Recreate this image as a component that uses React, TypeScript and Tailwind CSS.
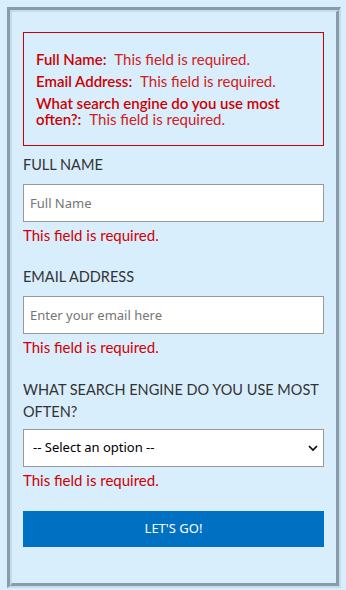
import React from "react";

const errors = [
  { label: "Full Name:", msg: "This field is required." },
  { label: "Email Address:", msg: "This field is required." },
  { label: "What search engine do you use most often?:", msg: "This field is required." },
];

const Label = ({ children }: { children: React.ReactNode }) => (
  <label className="block text-[14.5px] leading-[22px] text-[#333] uppercase">{children}</label>
);

const FieldError = () => (
  <p className="text-[15px] leading-[22px] text-[#d00000] mt-[2px]">This field is required.</p>
);

export default function App() {
  return (
    <div
      className="min-h-[590px] bg-[#d9eefc] pt-[7px] pl-[7px]"
      style={{ fontFamily: "Lato, 'Open Sans', sans-serif" }}
    >
      <div className="w-[334px] border-t-[3px] border-l-[3px] border-b-[2px] border-r-[2px] border-t-[#8a9ba8] border-l-[#8a9ba8] border-b-[#c4dbeb] border-r-[#c4dbeb]">
        <div className="border-t-2 border-l-2 border-b-[3px] border-r-[3px] border-t-[#c4dbeb] border-l-[#c4dbeb] border-b-[#8a9ba8] border-r-[#8a9ba8] pt-[20px] pl-[11px] pr-[12px] pb-[36px]">
          <div className="border border-[#cc0000] pt-[18px] pb-[18px] pl-[12px] pr-[8px]">
            <ul className="flex flex-col gap-[6px]">
              {errors.map((e) => (
                <li key={e.label} className="text-[15px] leading-[16px] text-[#cc0000]">
                  <span className="font-semibold">{e.label}</span>{" "}
                  <span className="ml-[4px] text-[#d02020]">{e.msg}</span>
                </li>
              ))}
            </ul>
          </div>

          <div className="mt-[8px]">
            <Label>Full Name</Label>
            <input
              type="text"
              placeholder="Full Name"
              className="mt-[8px] block w-full h-[38px] bg-white border border-[#999] px-[6px] text-[13px] placeholder:text-[#757575] outline-none"
              style={{ fontFamily: "'Noto Sans', sans-serif" }}
            />
            <FieldError />
          </div>

          <div className="mt-[20px]">
            <Label>Email Address</Label>
            <input
              type="email"
              placeholder="Enter your email here"
              className="mt-[8px] block w-full h-[38px] bg-white border border-[#999] px-[6px] text-[13px] placeholder:text-[#757575] outline-none"
              style={{ fontFamily: "'Noto Sans', sans-serif" }}
            />
            <FieldError />
          </div>

          <div className="mt-[21px]">
            <Label>What search engine do you use most often?</Label>
            <div className="relative mt-[6px]">
              <select
                className="block w-full h-[38px] appearance-none bg-white border border-[#999] pl-[9px] text-[13px] text-black outline-none"
                style={{ fontFamily: "'Noto Sans', sans-serif" }}
                defaultValue=""
              >
                <option value="">-- Select an option --</option>
                <option value="google">Google</option>
                <option value="bing">Bing</option>
                <option value="duckduckgo">DuckDuckGo</option>
              </select>
              <svg
                className="pointer-events-none absolute right-[6px] top-1/2 -translate-y-1/2"
                width="10"
                height="7"
                viewBox="0 0 10 7"
                fill="none"
              >
                <path d="M1 1.5L5 5.5L9 1.5" stroke="#000" strokeWidth="1.6" />
              </svg>
            </div>
            <FieldError />
          </div>

          <button
            type="submit"
            className="mt-[20px] block w-full h-[36px] bg-[#0071c2] text-white text-[13px] uppercase"
            style={{ fontFamily: "'Noto Sans', sans-serif" }}
          >
            Let's go!
          </button>
        </div>
      </div>
    </div>
  );
}
